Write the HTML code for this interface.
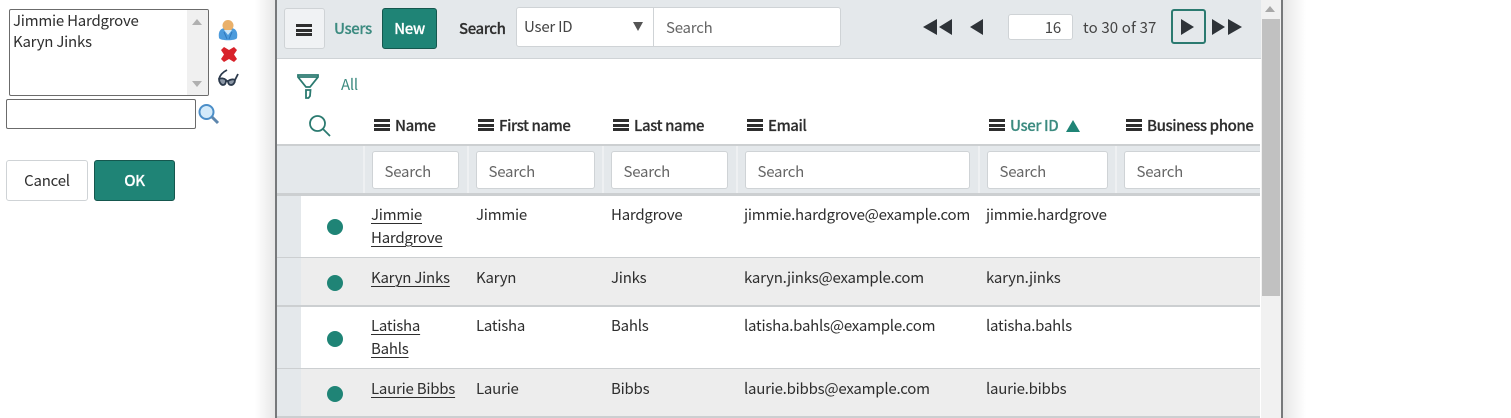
<!DOCTYPE html>
<html><head><meta charset="utf-8"><style>
html,body{margin:0;padding:0;background:#fff;width:1511px;height:418px;overflow:hidden}
body{font-family:"Noto Sans CJK JP","Liberation Sans",sans-serif;font-size:15px;letter-spacing:-.23px;color:#2e2e2e;position:relative}
.a{position:absolute;white-space:nowrap}
.t{position:absolute;white-space:nowrap;line-height:22px;height:22px}
.b{font-weight:500;letter-spacing:-.42px;-webkit-text-stroke:.2px currentColor}
.g{color:#2b7a70}
.u{text-decoration:underline;text-underline-offset:3px;text-decoration-thickness:1px}
.s{position:absolute;top:151px;height:38px;background:#fff;border:1px solid #cfd3d6;border-radius:3px;box-sizing:border-box;color:#666;line-height:38px;padding-top:1px;padding-left:11.5px;overflow:hidden}
.h{position:absolute;width:16px;height:12px;border-top:3px solid #2e2e2e;border-bottom:3px solid #2e2e2e;box-sizing:border-box}
.h:after{content:"";position:absolute;left:0;right:0;top:1.5px;height:3px;background:#2e2e2e}
.d{position:absolute;left:327px;width:16px;height:16px;border-radius:50%;background:#1f8476}
.v{position:absolute;top:146px;width:2px;height:47px;background:#eef0f2}
</style></head><body>
<div class="a" style="left:255px;top:0;width:21px;height:418px;background:linear-gradient(to right,#fff,#e6e6e6)"></div>
<div class="a" style="left:1282px;top:0;width:24px;height:418px;background:linear-gradient(to left,#fff,#e6e6e6)"></div>

<!-- left dialog -->
<div class="a" style="left:9px;top:9px;width:200px;height:87px;border:1px solid #6b6b6b;border-radius:2px;box-sizing:border-box;background:#fff;overflow:hidden">
 <div class="a" style="right:0;top:0;width:21px;height:85px;background:#f0f0f0"></div>
 <div class="a" style="left:182px;top:9px;border:5px solid transparent;border-top:0;border-bottom:6px solid #b0b0b0"></div>
 <div class="a" style="left:182px;top:71px;border:5px solid transparent;border-bottom:0;border-top:6px solid #b0b0b0"></div>
</div>
<div class="t" style="left:13px;top:10px">Jimmie Hardgrove</div>
<div class="t" style="left:13px;top:31px">Karyn Jinks</div>
<svg class="a" style="left:216px;top:18px" width="24" height="72" viewBox="0 0 24 72">
 <path d="M3 20c-1-6 1-9 5-10h8c4 1 6 4 5 10-1 3-17 3-18 0z" fill="#4c9bdc"/>
 <circle cx="12" cy="7.500" r="5.500" fill="#e9b06a"/>
 <path d="M8 12l4 5 4-5" fill="#cfe8f8"/><path d="M8 14l3 7M16 14l-3 7" stroke="#2f78bd" stroke-width="1" fill="none"/>
 <path d="M8 29l5 3 5-3 3 3-3 4.500 3 4.500-3 3-5-3-5 3-3-3 3-4.500-3-4.500z" fill="#d8222a"/>
 <path d="M3 61c2-1 5-1 7 1 0 3-1 5-3 5s-4-3-4-6zM12 63c3-2 6-2 7-1 0 3-2 5-4 5s-3-2-3-4z" fill="#8c97a6" stroke="#2c3a4c" stroke-width="1.800"/>
 <path d="M3 61c1-4 4-7 8-9M19 62l3-6M10 63h2" fill="none" stroke="#2c3a4c" stroke-width="1.800"/>
</svg>
<div class="a" style="left:6px;top:99px;width:190px;height:30px;border:1px solid #6b6b6b;border-radius:2px;box-sizing:border-box;background:#fff"></div>
<svg class="a" style="left:197px;top:103px" width="24" height="22" viewBox="0 0 24 22">
 <circle cx="9.500" cy="9" r="7" fill="#d3eafa" stroke="#4b8ec8" stroke-width="2"/><path d="M15 14l6 6" stroke="#5d86ad" stroke-width="3"/>
</svg>
<div class="a" style="left:6px;top:160px;width:82px;height:41px;border:1px solid #cfd3d6;border-radius:3px;box-sizing:border-box;background:#fff;text-align:center;line-height:39px">Cancel</div>
<div class="a b" style="left:94px;top:160px;width:81px;height:41px;border:1px solid #15574e;border-radius:3px;box-sizing:border-box;background:#1f8476;color:#fff;text-align:center;line-height:39px">OK</div>

<!-- panel -->
<div class="a" style="left:275px;top:0;width:2px;height:418px;background:#77797b;z-index:5"></div>
<div class="a" style="left:1281px;top:0;width:2px;height:418px;background:#77797b;z-index:5"></div>
<div class="a" style="left:1261px;top:0;width:20px;height:418px;background:#f1f1f1"></div>
<div class="a" style="left:1262px;top:19px;width:18px;height:277px;background:#c1c1c1"></div>
<div class="a" style="left:1265px;top:6px;border:5px solid transparent;border-top:0;border-bottom:6px solid #a8a8a8"></div>

<!-- top bar -->
<div class="a" style="left:277px;top:0;width:984px;height:59px;background:#e4e8eb;border-bottom:1px solid #cfd3d6;box-sizing:border-box"></div>
<div class="a" style="left:284px;top:8px;width:41px;height:41px;border:1px solid #cfd3d6;border-radius:3px;box-sizing:border-box;background:#f0f2f4"></div>
<div class="h" style="left:296px;top:24px"></div>
<div class="t b g" style="left:334px;top:18px;color:#3c8b80">Users</div>
<div class="a b" style="left:382px;top:8px;width:55px;height:41px;border:1px solid #15574e;border-radius:3px;box-sizing:border-box;background:#1f8476;color:#fff;text-align:center;line-height:39px">New</div>
<div class="t b" style="left:459px;top:18px">Search</div>
<div class="a" style="left:516px;top:7px;width:325px;height:40px;border:1px solid #cfd3d6;border-radius:3px;box-sizing:border-box;background:#fff"></div>
<div class="a" style="left:653px;top:8px;width:1px;height:38px;background:#cfd3d6"></div>
<div class="t" style="left:524px;top:16px;color:#444">User ID</div>
<div class="a" style="left:633px;top:22px;border:5px solid transparent;border-bottom:0;border-top:9px solid #555"></div>
<div class="t" style="left:666px;top:17px;color:#666">Search</div>

<svg class="a" style="left:920px;top:18px" width="70" height="18" viewBox="0 0 70 18" fill="#2e3338">
 <path d="M3 9l14-8v16zM19 9l13-8v16z"/><path d="M50 9l13-8v16z"/>
</svg>
<div class="a" style="left:1008px;top:14px;width:65px;height:26px;border:1px solid #cfd3d6;border-radius:3px;box-sizing:border-box;background:#fff;text-align:right;padding-right:11px;line-height:26px;color:#444">16</div>
<div class="t" style="left:1083px;top:17px;color:#444;letter-spacing:.15px">to 30 of 37</div>
<div class="a" style="left:1171px;top:9px;width:35px;height:35px;border:2px solid #2b7a70;border-radius:3px;box-sizing:border-box"></div>
<svg class="a" style="left:1180px;top:18px" width="66" height="18" viewBox="0 0 66 18" fill="#2e3338">
 <path d="M1 1l13 8-13 8z"/><path d="M32 1l13 8-13 8zM48 1l14 8-14 8z"/>
</svg>

<!-- filter -->
<svg class="a" style="left:295px;top:72px" width="26" height="28" viewBox="0 0 26 28" fill="none" stroke="#2b7a70" stroke-width="1.800">
 <path d="M3 3h20v2L15 15h-4L3 5zM4 5h18"/><path d="M11 18h4.500l-.5 6-1.500 2H11z"/>
</svg>
<div class="t" style="left:341px;top:74px;color:#3c8b80">All</div>

<!-- header -->
<svg class="a" style="left:307px;top:114px" width="26" height="26" viewBox="0 0 26 26" fill="none" stroke="#2b7a70" stroke-width="1.800">
 <circle cx="10.500" cy="9.500" r="7.500"/><path d="M16 15l7 7"/>
</svg>
<div class="h" style="left:374px;top:119px"></div><div class="t b" style="left:395px;top:115px">Name</div>
<div class="h" style="left:478px;top:119px"></div><div class="t b" style="left:499px;top:115px">First name</div>
<div class="h" style="left:613px;top:119px"></div><div class="t b" style="left:634px;top:115px">Last name</div>
<div class="h" style="left:747px;top:119px"></div><div class="t b" style="left:768px;top:115px">Email</div>
<div class="h" style="left:989px;top:119px"></div><div class="t b g" style="left:1010px;top:115px;color:#3c8b80">User ID</div>
<div class="a" style="left:1066px;top:120px;border:7px solid transparent;border-top:0;border-bottom:12px solid #1f8476"></div>
<div class="h" style="left:1126px;top:119px"></div><div class="t b" style="left:1147px;top:115px">Business phone</div>

<!-- search row -->
<div class="a" style="left:277px;top:144px;width:983px;height:52px;background:#e4e8eb;border-top:2px solid #cccfd1;border-bottom:3px solid #cccfd1;box-sizing:border-box"></div>
<div class="v" style="left:363px"></div><div class="v" style="left:467px"></div><div class="v" style="left:602px"></div><div class="v" style="left:736px"></div><div class="v" style="left:978px"></div><div class="v" style="left:1115px"></div>
<div class="s" style="left:372px;width:87px">Search</div>
<div class="s" style="left:476px;width:119px">Search</div>
<div class="s" style="left:611px;width:117px">Search</div>
<div class="s" style="left:745px;width:225px">Search</div>
<div class="s" style="left:987px;width:121px">Search</div>
<div class="s" style="left:1124px;width:136px;border-right:0;border-radius:3px 0 0 3px">Search</div>

<!-- rows -->
<div class="a" style="left:277px;top:196px;width:983px;height:222px;background:#fff"></div>
<div class="a" style="left:277px;top:257px;width:983px;height:50px;background:#ededed;border-top:1px solid #cccfd1;border-bottom:2px solid #cccfd1;box-sizing:border-box"></div>
<div class="a" style="left:277px;top:368px;width:983px;height:50px;background:#ededed;border-top:1px solid #cccfd1;border-bottom:2px solid #cccfd1;box-sizing:border-box"></div>
<div class="a" style="left:277px;top:196px;width:24px;height:222px;background:#e4e8eb"></div>
<div class="a" style="left:277px;top:257px;width:24px;height:1px;background:#cccfd1"></div>
<div class="a" style="left:277px;top:305px;width:24px;height:2px;background:#cccfd1"></div>
<div class="a" style="left:277px;top:368px;width:24px;height:1px;background:#cccfd1"></div>
<div class="a" style="left:277px;top:416px;width:24px;height:2px;background:#cccfd1"></div>

<div class="d" style="top:219px"></div><div class="d" style="top:275px"></div><div class="d" style="top:331px"></div><div class="d" style="top:386px"></div>

<div class="t u" style="left:371px;top:204px">Jimmie</div><div class="t u" style="left:371px;top:227px">Hardgrove</div>
<div class="t" style="left:476px;top:204px">Jimmie</div><div class="t" style="left:611px;top:204px">Hardgrove</div><div class="t" style="left:744px;top:204px">jimmie.hardgrove@example.com</div><div class="t" style="left:986px;top:204px">jimmie.hardgrove</div>

<div class="t u" style="left:371px;top:267px">Karyn Jinks</div>
<div class="t" style="left:476px;top:267px">Karyn</div><div class="t" style="left:611px;top:267px">Jinks</div><div class="t" style="left:744px;top:267px">karyn.jinks@example.com</div><div class="t" style="left:986px;top:267px">karyn.jinks</div>

<div class="t u" style="left:371px;top:315px">Latisha</div><div class="t u" style="left:371px;top:338px">Bahls</div>
<div class="t" style="left:476px;top:315px">Latisha</div><div class="t" style="left:611px;top:315px">Bahls</div><div class="t" style="left:744px;top:315px">latisha.bahls@example.com</div><div class="t" style="left:986px;top:315px">latisha.bahls</div>

<div class="t u" style="left:371px;top:378px">Laurie Bibbs</div>
<div class="t" style="left:476px;top:378px">Laurie</div><div class="t" style="left:611px;top:378px">Bibbs</div><div class="t" style="left:744px;top:378px">laurie.bibbs@example.com</div><div class="t" style="left:986px;top:378px">laurie.bibbs</div>
</body></html>
